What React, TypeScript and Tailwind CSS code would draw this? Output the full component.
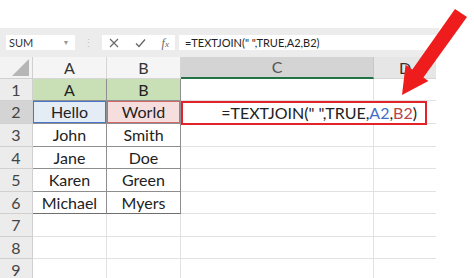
import React from 'react';

type Row = { n: number; h: number; a?: string; b?: string };

const rows: Row[] = [
  { n: 1, h: 22, a: 'A', b: 'B' },
  { n: 2, h: 23, a: 'Hello', b: 'World' },
  { n: 3, h: 23, a: 'John', b: 'Smith' },
  { n: 4, h: 22, a: 'Jane', b: 'Doe' },
  { n: 5, h: 23, a: 'Karen', b: 'Green' },
  { n: 6, h: 22, a: 'Michael', b: 'Myers' },
  { n: 7, h: 23 },
  { n: 8, h: 22 },
  { n: 9, h: 22 },
];

const Toolbar = () => (
  <div className="flex items-center h-[29px] w-[439px] bg-[#ececec] font-[Lato,sans-serif]">
    {/* Name box */}
    <div className="ml-[6px] flex items-center justify-between w-[69px] h-[15px] bg-white pl-[3px] pr-[5px]">
      <span className="text-[11px] text-[#333] leading-none">SUM</span>
      <span className="text-[7px] text-[#999] leading-none">▼</span>
    </div>
    <span className="ml-[8px] text-[11px] text-[#c4c4c4] leading-none">⋮</span>
    {/* Cancel / enter / function */}
    <div className="ml-[8px] flex items-center w-[74px] h-[15px] bg-white">
      <svg width="10" height="10" viewBox="0 0 10 10" className="ml-[7px]">
        <path d="M1 1 L9 9 M9 1 L1 9" stroke="#666" strokeWidth="1.1" fill="none" />
      </svg>
      <svg width="11" height="10" viewBox="0 0 11 10" className="ml-[16px]">
        <path d="M1 5.5 L4 8.5 L10 1.5" stroke="#666" strokeWidth="1.3" fill="none" />
      </svg>
      <span className="ml-[16px] text-[12px] italic text-[#666] font-[Liberation_Serif,serif] leading-none">
        f<span className="text-[9px]">x</span>
      </span>
    </div>
    {/* Formula bar */}
    <div className="ml-[4px] flex items-center w-[262px] h-[15px] bg-white pl-[6px]">
      <span className="text-[11px] text-[#222] leading-none whitespace-pre">=TEXTJOIN(" ",TRUE,A2,B2)</span>
    </div>
  </div>
);

const HeaderRow = () => (
  <div className="flex h-[22px] text-[16px] font-[Lato,sans-serif]">
    <div className="relative w-[33px] bg-[#f3f3f3] border-r border-b border-[#d0d0d0]">
      <svg width="17" height="17" viewBox="0 0 17 17" className="absolute right-[3px] bottom-[2px]">
        <path d="M17 0 L17 17 L0 17 Z" fill="#b6b6b6" />
      </svg>
    </div>
    <div className="w-[74px] flex items-center justify-center bg-[#f5f5f5] border-r border-b border-[#d6d6d6] text-[#333]">A</div>
    <div className="w-[74px] flex items-center justify-center bg-[#f5f5f5] border-r border-b border-[#d6d6d6] text-[#333]">B</div>
    <div className="w-[193px] flex items-center justify-center bg-[#d4d4d4] border-r border-[#c8c8c8] border-b-2 border-b-[#217346] text-[#555]">C</div>
    <div className="w-[62px] flex items-center justify-center bg-[#e6e6e6] border-b border-[#d6d6d6] text-[#333]">D</div>
  </div>
);

const DataRow = ({ row }: { row: Row }) => {
  const inTable = row.a !== undefined;
  const dark = inTable ? 'border-[#8e8e8e]' : 'border-[#e1e1e1]';
  const bottomDark = row.n === 6 ? 'border-b-[#6f6f6f]' : '';
  let aBg = 'bg-white';
  let bBg = 'bg-white';
  if (row.n === 1) {
    aBg = 'bg-[#c9e0b6]';
    bBg = 'bg-[#c9e0b6]';
  }
  if (row.n === 2) {
    aBg = 'bg-[#e4ecf6]';
    bBg = 'bg-[#f6dede]';
  }
  return (
    <div className="flex text-[16px] text-[#222] font-[Lato,sans-serif]" style={{ height: row.h }}>
      <div
        className={`w-[33px] flex items-center justify-center border-r border-b border-[#d0d0d0] text-[#444] ${
          row.n === 2 ? 'bg-[#d4d4d4]' : 'bg-[#ececec]'
        }`}
      >
        {row.n}
      </div>
      <div className={`relative w-[74px] flex items-center justify-center border-r border-b ${dark} ${bottomDark} ${aBg}`}>
        {row.n === 2 && <div className="absolute inset-0 border border-[#4a78c8]" />}
        <span className="relative">{row.a}</span>
      </div>
      <div className={`relative w-[74px] flex items-center justify-center border-r border-b ${dark} ${bottomDark} ${bBg}`}>
        {row.n === 2 && <div className="absolute inset-0 border border-[#d06b6b]" />}
        <span className="relative">{row.b}</span>
      </div>
      <div className="w-[193px] border-r border-b border-[#e1e1e1] bg-white" />
      <div className="w-[62px] border-b border-[#e1e1e1] bg-white" />
    </div>
  );
};

export default function App() {
  return (
    <div className="relative w-[474px] h-[278px] bg-white overflow-hidden">
      <div className="h-[28px]" />
      <Toolbar />
      <HeaderRow />
      {rows.map((r) => (
        <DataRow key={r.n} row={r} />
      ))}

      {/* Edited cell C2 */}
      <div className="absolute left-[181px] top-[101px] w-[246px] h-[24px] border-2 border-[#e3222a] bg-white flex items-center justify-end pr-[8px] font-[Lato,sans-serif] text-[16px] text-[#222] whitespace-pre">
        <span>
          =TEXTJOIN(" ",TRUE,<span className="text-[#3f6fc4]">A2</span>,<span className="text-[#b8474a]">B2</span>)
        </span>
      </div>

      {/* Red arrow */}
      <svg width="474" height="278" className="absolute left-0 top-0 pointer-events-none">
        <path d="M455 9 L467 17 L423 78 L412 70 Z" fill="#ee1c1c" />
        <path d="M402 95 L405.6 64.7 L428.4 80.9 Z" fill="#ee1c1c" />
      </svg>
    </div>
  );
}
